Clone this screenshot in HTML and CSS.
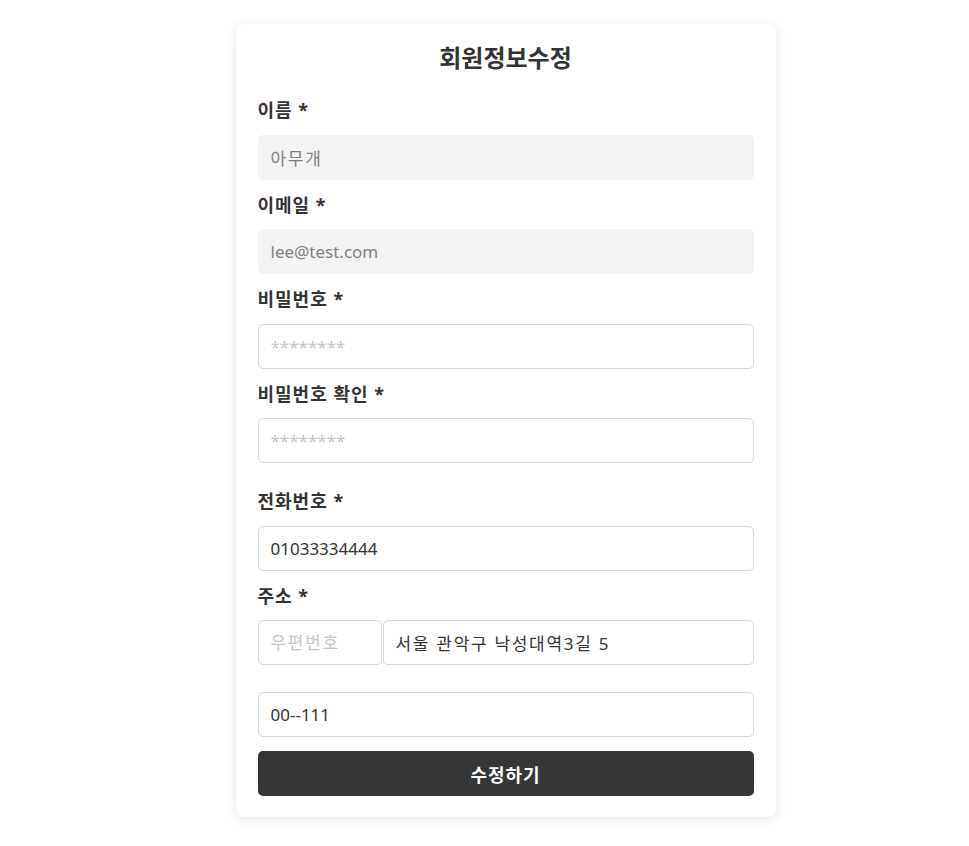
FILE: index.html
```
<!DOCTYPE html>
<html lang="ko">
<head>
    <meta charset="UTF-8">
    <meta name="viewport" content="width=device-width, initial-scale=1.0">
    <title>회원정보수정</title>
    <link rel="stylesheet" href="styles.css">
</head>
<body>
    <div class="edit-card">
        <h2 class="edit-title">회원정보수정</h2>
        <form class="edit-form">
            <label class="field-label">이름 *</label>
            <input class="field-input ko" type="text" value="아무개" disabled>

            <label class="field-label">이메일 *</label>
            <input class="field-input" type="text" value="lee@test.com" disabled>

            <label class="field-label">비밀번호 *</label>
            <input class="field-input" type="password" placeholder="********">

            <label class="field-label">비밀번호 확인 *</label>
            <input class="field-input" type="password" placeholder="********">
            <div class="field-msg"></div>

            <label class="field-label">전화번호 *</label>
            <input class="field-input" type="text" value="01033334444">

            <label class="field-label">주소 *</label>
            <div class="address-row">
                <input class="field-input ko zipcode" type="text" placeholder="우편번호">
                <input class="field-input ko address" type="text" value="서울 관악구 낙성대역3길 5">
            </div>
            <input class="field-input detail" type="text" value="00--111">

            <button class="submit-btn" type="button">수정하기</button>
        </form>
    </div>
</body>
</html>
```

FILE: styles.css
```
body {
    margin: 0;
    padding: 24px 0 28px 42px;
    background-color: #ffffff;
    font-family: "Noto Sans", "Noto Sans CJK KR", sans-serif;
    color: #333333;
}
.edit-card {
    width: 496px;
    margin: 0 auto;
    padding: 22px 22px 21px;
    background-color: #ffffff;
    border-radius: 8px;
    box-shadow: 0 2px 12px rgba(0, 0, 0, 0.1);
}
.edit-title {
    margin: 0 0 15px;
    font-size: 24px;
    line-height: 24px;
    font-weight: bold;
    text-align: center;
    color: #333333;
}
.edit-form {
    display: flex;
    flex-direction: column;
}
.field-label {
    display: block;
    margin: 12px 0 11.5px;
    font-size: 18px;
    line-height: 26px;
    letter-spacing: 1px;
    font-weight: bold;
    color: #333333;
}
.field-input {
    box-sizing: border-box;
    width: 100%;
    height: 45px;
    padding: 0 12px;
    border: 1px solid #d9d9d9;
    border-radius: 5px;
    background-color: #ffffff;
    font-family: inherit;
    font-size: 17px;
    color: #333333;
    outline: none;
}
.field-input.ko {
    letter-spacing: 1.7px;
}
.field-input::placeholder {
    color: #c6c6c6;
}
.field-input:disabled {
    border-color: #f3f3f3;
    background-color: #f3f3f3;
    color: #808080;
}
.field-msg {
    height: 13px;
}
.address-row {
    display: flex;
    gap: 1px;
}
.zipcode {
    width: 25%;
    flex: none;
}
.address {
    flex: 1;
    min-width: 0;
}
.detail {
    margin-top: 27px;
}
.submit-btn {
    height: 45px;
    margin-top: 14px;
    border: none;
    border-radius: 5px;
    background-color: #363636;
    color: #ffffff;
    font-family: inherit;
    font-size: 18px;
    letter-spacing: 1px;
    font-weight: bold;
    cursor: pointer;
}
```
